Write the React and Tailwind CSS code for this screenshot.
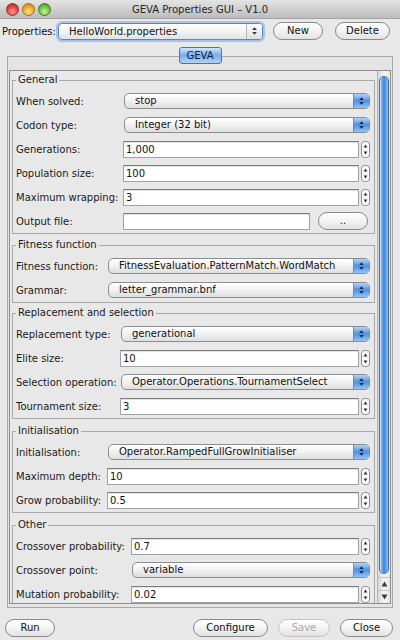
import React from 'react'

function UpDown({ fill = '#1c2c48' }) {
  return (
    <svg width="16" height="14" viewBox="0 0 16 14">
      <path d="M5.5 6L8 3L10.5 6Z" fill={fill} />
      <path d="M5.5 8L8 11L10.5 8Z" fill={fill} />
    </svg>
  )
}

function Spinner() {
  return (
    <svg width="9" height="17" viewBox="0 0 9 17" className="ml-[2px] shrink-0">
      <rect x="0.5" y="0.5" width="8" height="16" rx="3" fill="#fafafa" stroke="#8a8a8a" />
      <path d="M2.6 6.5L4.5 3.5L6.4 6.5Z" fill="#2b2b2b" />
      <path d="M2.6 10.5L4.5 13.5L6.4 10.5Z" fill="#2b2b2b" />
    </svg>
  )
}

function Combo({ value }) {
  return (
    <div className="ml-[1px] flex h-[16px] items-stretch overflow-hidden rounded-[5px] border border-[#8d8d8d] bg-gradient-to-b from-white via-[#f1f1f1] to-[#dedede]">
      <span className="flex-1 truncate pl-[10px] leading-[14px]">{value}</span>
      <span className="flex w-[16px] items-center justify-center border-l border-[#6d8fbd] bg-gradient-to-b from-[#b3d3f6] via-[#4e91e2] to-[#93c3f4]">
        <UpDown />
      </span>
    </div>
  )
}

function Field({ value }) {
  return (
    <div className="flex items-center">
      <div className="h-[17px] flex-1 border border-[#a2a2a2] border-t-[#7c7c7c] bg-white pl-[2px] leading-[15px] shadow-[inset_0_1px_1px_rgba(0,0,0,0.12)]">
        {value}
      </div>
      <Spinner />
    </div>
  )
}

function Pill({ children, className = '', disabled }) {
  return (
    <div
      className={`flex h-[18px] items-center justify-center rounded-full border bg-gradient-to-b from-white via-[#f3f3f3] to-[#e2e2e2] leading-none ${
        disabled ? 'border-[#c2c2c2] text-[#ababab]' : 'border-[#8a8a8a] text-[#111]'
      } ${className}`}
    >
      {children}
    </div>
  )
}

function Row({ cols, label, children }) {
  return (
    <div className={`grid h-[24px] items-center ${cols}`}>
      <span className="whitespace-nowrap text-[#1a1a1a]">{label}</span>
      {children}
    </div>
  )
}

function Group({ title, className = '', children }) {
  return (
    <fieldset className={`border border-[#a9a9a9] pl-[3px] pr-[4px] pt-[2px] ${className}`}>
      <legend className="px-[2px] leading-[14px] text-[#1a1a1a]">{title}</legend>
      {children}
    </fieldset>
  )
}

export default function App() {
  return (
    <div className="flex h-[640px] w-[400px] flex-col overflow-hidden bg-[#e8e8e8] font-['DejaVu_Sans',sans-serif] text-[10px] text-[#111]">
      {/* title bar */}
      <div className="grid h-[19px] shrink-0 grid-cols-[52px_1fr_52px] items-center border-b border-[#a3a3a3] bg-gradient-to-b from-[#e4e4e4] to-[#bcbcbc]">
        <div className="flex gap-[3px] pl-[6px]">
          <span className="h-[13px] w-[13px] rounded-full border border-[#9a2a25] bg-[radial-gradient(circle_at_50%_70%,#ff9a90,#e0453d_55%,#a8231c)]" />
          <span className="h-[13px] w-[13px] rounded-full border border-[#a86d15] bg-[radial-gradient(circle_at_50%_70%,#ffe08a,#eaa830_55%,#b4761a)]" />
          <span className="h-[13px] w-[13px] rounded-full border border-[#3f7f22] bg-[radial-gradient(circle_at_50%_70%,#c5f59a,#6cc13e_55%,#3f8a22)]" />
        </div>
        <div className="text-center text-[#262626]">GEVA Properties GUI – V1.0</div>
        <div />
      </div>

      {/* properties row */}
      <div className="flex shrink-0 items-center pt-[3px]">
        <span className="w-[58px] pl-[2px]">Properties:</span>
        <div className="flex h-[17px] w-[205px] items-stretch overflow-hidden rounded-[4px] border border-[#5a86c6] bg-gradient-to-b from-white via-[#f3f3f3] to-[#e2e2e2] shadow-[0_0_0_2px_#a5c3ea]">
          <span className="flex-1 pl-[10px] leading-[15px]">HelloWorld.properties</span>
          <span className="flex w-[16px] items-center justify-center border-l border-[#b5b5b5] bg-gradient-to-b from-white to-[#dedede]">
            <UpDown fill="#333" />
          </span>
        </div>
        <Pill className="ml-[10px] w-[50px]">New</Pill>
        <Pill className="ml-[12px] w-[55px]">Delete</Pill>
      </div>

      {/* tab */}
      <div className="relative z-10 mx-auto -mb-[8px] mt-[7px] flex h-[17px] w-[43px] shrink-0 items-center justify-center rounded-[3px] border border-[#4d74a8] bg-gradient-to-b from-[#d2e6fa] via-[#79aee9] to-[#b0d4f7] text-[#10204a]">
        GEVA
      </div>

      {/* tab panel */}
      <div className="mx-[7px] flex min-h-0 flex-1 flex-col border border-[#a8a8a8] bg-[#e4e4e4] px-[1px] pb-[3px] pt-[13px]">
        <div className="flex min-h-0 flex-1 border border-[#8e8e8e] bg-[#e8e8e8]">
          <div className="min-w-0 flex-1 overflow-hidden px-[2px] pt-[2px]">
            <Group title="General">
              <Row cols="grid-cols-[107px_1fr]" label="When solved:"><Combo value="stop" /></Row>
              <Row cols="grid-cols-[107px_1fr]" label="Codon type:"><Combo value="Integer (32 bit)" /></Row>
              <Row cols="grid-cols-[107px_1fr]" label="Generations:"><Field value="1,000" /></Row>
              <Row cols="grid-cols-[107px_1fr]" label="Population size:"><Field value="100" /></Row>
              <Row cols="grid-cols-[107px_1fr]" label="Maximum wrapping:"><Field value="3" /></Row>
              <Row cols="grid-cols-[107px_1fr]" label="Output file:">
                <div className="flex items-center">
                  <div className="h-[17px] flex-1 border border-[#a2a2a2] border-t-[#7c7c7c] bg-white shadow-[inset_0_1px_1px_rgba(0,0,0,0.12)]" />
                  <Pill className="ml-[8px] mr-[2px] w-[50px]">..</Pill>
                </div>
              </Row>
            </Group>

            <Group title="Fitness function" className="mt-[4px]">
              <Row cols="grid-cols-[91px_1fr]" label="Fitness function:"><Combo value="FitnessEvaluation.PatternMatch.WordMatch" /></Row>
              <Row cols="grid-cols-[91px_1fr]" label="Grammar:"><Combo value="letter_grammar.bnf" /></Row>
            </Group>

            <Group title="Replacement and selection" className="mt-[3px]">
              <Row cols="grid-cols-[104px_1fr]" label="Replacement type:"><Combo value="generational" /></Row>
              <Row cols="grid-cols-[104px_1fr]" label="Elite size:"><Field value="10" /></Row>
              <Row cols="grid-cols-[104px_1fr]" label="Selection operation:"><Combo value="Operator.Operations.TournamentSelect" /></Row>
              <Row cols="grid-cols-[104px_1fr]" label="Tournament size:"><Field value="3" /></Row>
            </Group>

            <Group title="Initialisation" className="mt-[5px]">
              <Row cols="grid-cols-[91px_1fr]" label="Initialisation:"><Combo value="Operator.RampedFullGrowInitialiser" /></Row>
              <Row cols="grid-cols-[91px_1fr]" label="Maximum depth:"><Field value="10" /></Row>
              <Row cols="grid-cols-[91px_1fr]" label="Grow probability:"><Field value="0.5" /></Row>
            </Group>

            <Group title="Other" className="mt-[5px]">
              <Row cols="grid-cols-[115px_1fr]" label="Crossover probability:"><Field value="0.7" /></Row>
              <Row cols="grid-cols-[115px_1fr]" label="Crossover point:"><Combo value="variable" /></Row>
              <Row cols="grid-cols-[115px_1fr]" label="Mutation probability:"><Field value="0.02" /></Row>
            </Group>
          </div>

          {/* scrollbar */}
          <div className="flex w-[13px] shrink-0 flex-col border-l border-[#b4b4b4] bg-gradient-to-r from-[#d6d6d6] via-[#f6f6f6] to-[#e6e6e6]">
            <div className="flex min-h-0 flex-1 flex-col px-[1px] pb-[3px] pt-[5px]">
              <div className="flex-1 rounded-full border border-[#3f6fae] bg-gradient-to-r from-[#9cc6f2] via-[#3c84dd] to-[#8dbcf0] shadow-[inset_1px_0_1px_rgba(255,255,255,0.6)]" />
            </div>
            <div className="flex h-[13px] items-center justify-center border-t border-[#c4c4c4]">
              <svg width="7" height="6" viewBox="0 0 7 6"><path d="M0.5 5.5L3.5 0.5L6.5 5.5Z" fill="#3a3a3a" /></svg>
            </div>
            <div className="flex h-[13px] items-center justify-center border-t border-[#c4c4c4]">
              <svg width="7" height="6" viewBox="0 0 7 6"><path d="M0.5 0.5L3.5 5.5L6.5 0.5Z" fill="#3a3a3a" /></svg>
            </div>
          </div>
        </div>
      </div>

      {/* bottom buttons */}
      <div className="flex h-[32px] shrink-0 items-start pt-[11px]">
        <Pill className="ml-[5px] w-[50px]">Run</Pill>
        <div className="flex-1" />
        <Pill className="w-[75px]">Configure</Pill>
        <Pill className="ml-[10px] w-[52px]" disabled>Save</Pill>
        <Pill className="ml-[10px] mr-[7px] w-[53px]">Close</Pill>
      </div>
    </div>
  )
}
